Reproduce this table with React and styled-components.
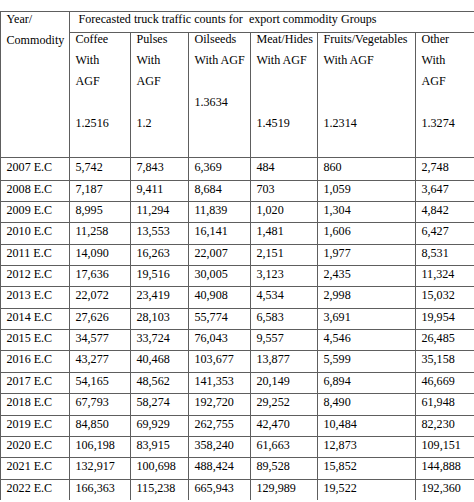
import React from 'react'
import styled, { createGlobalStyle } from 'styled-components'

const GlobalStyle = createGlobalStyle`
  html, body {
    margin: 0;
    padding: 0;
    background: #fff;
  }
  body {
    width: 474px;
    height: 502px;
    overflow: hidden;
  }
`

const Page = styled.div`
  padding-top: 11px;
  font-family: "Liberation Serif", "Times New Roman", serif;
  font-size: 12.1px;
  color: #000;
`

const Table = styled.table`
  width: 474px;
  table-layout: fixed;
  border-collapse: collapse;
`

const Cell = styled.td`
  border: 1px solid #5e5e5e;
  padding: ${p => (p.$top ? p.$top : 0)}px 4px 0 5.5px;
  vertical-align: top;
  text-align: left;
  font-weight: 400;
  white-space: pre;
  line-height: 12px;
`

const HeadRow = styled.tr`
  height: ${p => p.$h}px;
`

const BodyRow = styled.tr`
  height: ${p => p.$h}px;

  &:last-child td {
    border-bottom: none;
  }
`

const Line = styled.div`
  height: 21px;
`

const widths = [69, 61, 58, 62, 67, 98, 59]

const groups = [
  ['Coffee', 'With', 'AGF', '', '1.2516'],
  ['Pulses', 'With', 'AGF', '', '1.2'],
  ['Oilseeds', 'With AGF', '', '1.3634'],
  ['Meat/Hides', 'With AGF', '', '', '1.4519'],
  ['Fruits/Vegetables', 'With AGF', '', '', '1.2314'],
  ['Other', 'With', 'AGF', '', '1.3274'],
]

const rows = [
  ['2007 E.C', '5,742', '7,843', '6,369', '484', '860', '2,748'],
  ['2008 E.C', '7,187', '9,411', '8,684', '703', '1,059', '3,647'],
  ['2009 E.C', '8,995', '11,294', '11,839', '1,020', '1,304', '4,842'],
  ['2010 E.C', '11,258', '13,553', '16,141', '1,481', '1,606', '6,427'],
  ['2011 E.C', '14,090', '16,263', '22,007', '2,151', '1,977', '8,531'],
  ['2012 E.C', '17,636', '19,516', '30,005', '3,123', '2,435', '11,324'],
  ['2013 E.C', '22,072', '23,419', '40,908', '4,534', '2,998', '15,032'],
  ['2014 E.C', '27,626', '28,103', '55,774', '6,583', '3,691', '19,954'],
  ['2015 E.C', '34,577', '33,724', '76,043', '9,557', '4,546', '26,485'],
  ['2016 E.C', '43,277', '40,468', '103,677', '13,877', '5,599', '35,158'],
  ['2017 E.C', '54,165', '48,562', '141,353', '20,149', '6,894', '46,669'],
  ['2018 E.C', '67,793', '58,274', '192,720', '29,252', '8,490', '61,948'],
  ['2019 E.C', '84,850', '69,929', '262,755', '42,470', '10,484', '82,230'],
  ['2020 E.C', '106,198', '83,915', '358,240', '61,663', '12,873', '109,151'],
  ['2021 E.C', '132,917', '100,698', '488,424', '89,528', '15,852', '144,888'],
  ['2022 E.C', '166,363', '115,238', '665,943', '129,989', '19,522', '192,360'],
]

export default function App() {
  return (
    <Page>
      <GlobalStyle />
      <Table>
        <colgroup>
          {widths.map((w, i) => <col key={i} style={{ width: w }} />)}
        </colgroup>
        <thead>
          <HeadRow $h={21.3}>
            <Cell as="th" rowSpan={2} $top={1}>
              <Line>Year/</Line>
              <Line>Commodity</Line>
            </Cell>
            <Cell as="th" colSpan={6} $top={1}>
              {' Forecasted truck traffic counts for  export commodity Groups'}
            </Cell>
          </HeadRow>
          <HeadRow $h={124.7}>
            {groups.map((g, i) => (
              <Cell as="th" key={i}>
                {g.map((t, j) => <Line key={j}>{t}</Line>)}
              </Cell>
            ))}
          </HeadRow>
        </thead>
        <tbody>
          {rows.map((r, i) => (
            <BodyRow key={r[0]} $h={i === 0 ? 22.6 : 21.36}>
              {r.map((v, j) => (
                <Cell key={j} $top={i === 0 ? 3 : 2}>{v}</Cell>
              ))}
            </BodyRow>
          ))}
        </tbody>
      </Table>
    </Page>
  )
}
